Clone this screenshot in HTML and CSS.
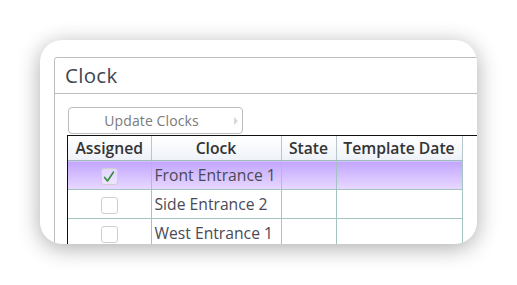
FILE: index.html
```html
<!DOCTYPE html>
<html>
<head>
<meta charset="utf-8">
<link rel="stylesheet" href="styles.css">
</head>
<body>
<div class="card">
  <div class="panel">
    <div class="panel-head">Clock</div>
    <div class="panel-body">
      <button class="btn"><span class="btn-label">Update Clocks</span><span class="btn-arrow"></span></button>
      <div class="grid-wrap">
        <table class="grid">
          <colgroup>
            <col class="c1"><col class="c2"><col class="c3"><col class="c4">
          </colgroup>
          <thead>
            <tr><th>Assigned</th><th>Clock</th><th>State</th><th>Template Date</th></tr>
          </thead>
          <tbody>
            <tr class="sel"><td class="chk"><span class="box on"><svg class="tick" viewBox="0 0 16 16" width="14" height="14"><path d="M3 8.5 L6.3 12.5 L13 2.5" fill="none" stroke="#2f8a3c" stroke-width="1.8" stroke-linecap="round" stroke-linejoin="round"/></svg></span></td><td>Front Entrance 1</td><td></td><td></td></tr>
            <tr><td class="chk"><span class="box"></span></td><td>Side Entrance 2</td><td></td><td></td></tr>
            <tr><td class="chk"><span class="box"></span></td><td>West Entrance 1</td><td></td><td></td></tr>
          </tbody>
        </table>
      </div>
    </div>
  </div>
</div>
</body>
</html>
```
FILE: styles.css
```css
html, body {
  margin: 0;
  padding: 0;
  background: #ffffff;
}
body {
  width: 517px;
  height: 285px;
  overflow: hidden;
  font-family: "Open Sans", "Liberation Sans", sans-serif;
}
.card {
  margin: 40px 0 0 40px;
  width: 437px;
  height: 204px;
  background: #fff;
  border-radius: 22px;
  overflow: hidden;
  box-shadow: 0 4px 22px rgba(0, 0, 0, 0.33);
}
.panel {
  margin: 17px 0 0 14px;
  width: 470px;
  height: 260px;
  border: 1px solid #bdbdbd;
  border-radius: 3px 0 0 0;
  box-sizing: border-box;
}
.panel-head {
  height: 35px;
  border-bottom: 1px solid #bdbdbd;
  padding-left: 10px;
  font-size: 20.5px;
  line-height: 35px;
  color: #3e4752;
  letter-spacing: 0.3px;
}
.panel-body {
  padding: 13px 0 0 12px;
}
.btn {
  display: flex;
  align-items: center;
  width: 175px;
  height: 27px;
  padding: 0;
  border: 1px solid #bcbcbc;
  border-radius: 4px;
  background: #fff;
  font-family: "Open Sans", "Liberation Sans", sans-serif;
  font-size: 14px;
  color: #7a7a7a;
  box-sizing: border-box;
  margin-left: 1px;
}
.btn-label {
  flex: 1;
  text-align: center;
  padding-left: 0;
  letter-spacing: 0.1px;
}
.btn-arrow {
  width: 0;
  height: 0;
  border-top: 4px solid transparent;
  border-bottom: 4px solid transparent;
  border-left: 4px solid #d8d8d8;
  margin-right: 4px;
}
.grid-wrap {
  margin-top: 1px;
  border-top: 1px solid #111;
  border-left: 1px solid #111;
  width: 430px;
}
.grid {
  border-collapse: collapse;
  table-layout: fixed;
  width: 394px;
}
.c1 { width: 83px; }
.c2 { width: 130px; }
.c3 { width: 55px; }
.c4 { width: 126px; }
.grid th {
  height: 24px;
  padding: 0;
  font-weight: 600;
  font-size: 15.7px;
  color: #333;
  text-align: center;
  background: linear-gradient(#ffffff, #eef2f8);
  border-right: 1px solid #b9c6cc;
  border-bottom: 1px solid #9dbfbc;
  line-height: 24px;
}
.grid td {
  height: 28px;
  padding: 0 0 0 3px;
  font-size: 15.7px;
  color: #4a4a56;
  border-right: 1px solid #a3c4c1;
  border-bottom: 1px solid #a3c4c1;
  white-space: nowrap;
  overflow: hidden;
}
.grid td.chk {
  text-align: center;
  padding: 0;
}
.grid tr.sel td {
  background: linear-gradient(#c2a5ff, #e8d9ff);
}
.box {
  display: inline-flex;
  align-items: center;
  justify-content: center;
  width: 17px;
  height: 17px;
  border: 1px solid #cfcfcf;
  border-radius: 3px;
  background: #fff;
  vertical-align: middle;
  box-sizing: border-box;
}
.box.on {
  background: rgba(255, 255, 255, 0.45);
}
.tick {
  display: block;
}
```
